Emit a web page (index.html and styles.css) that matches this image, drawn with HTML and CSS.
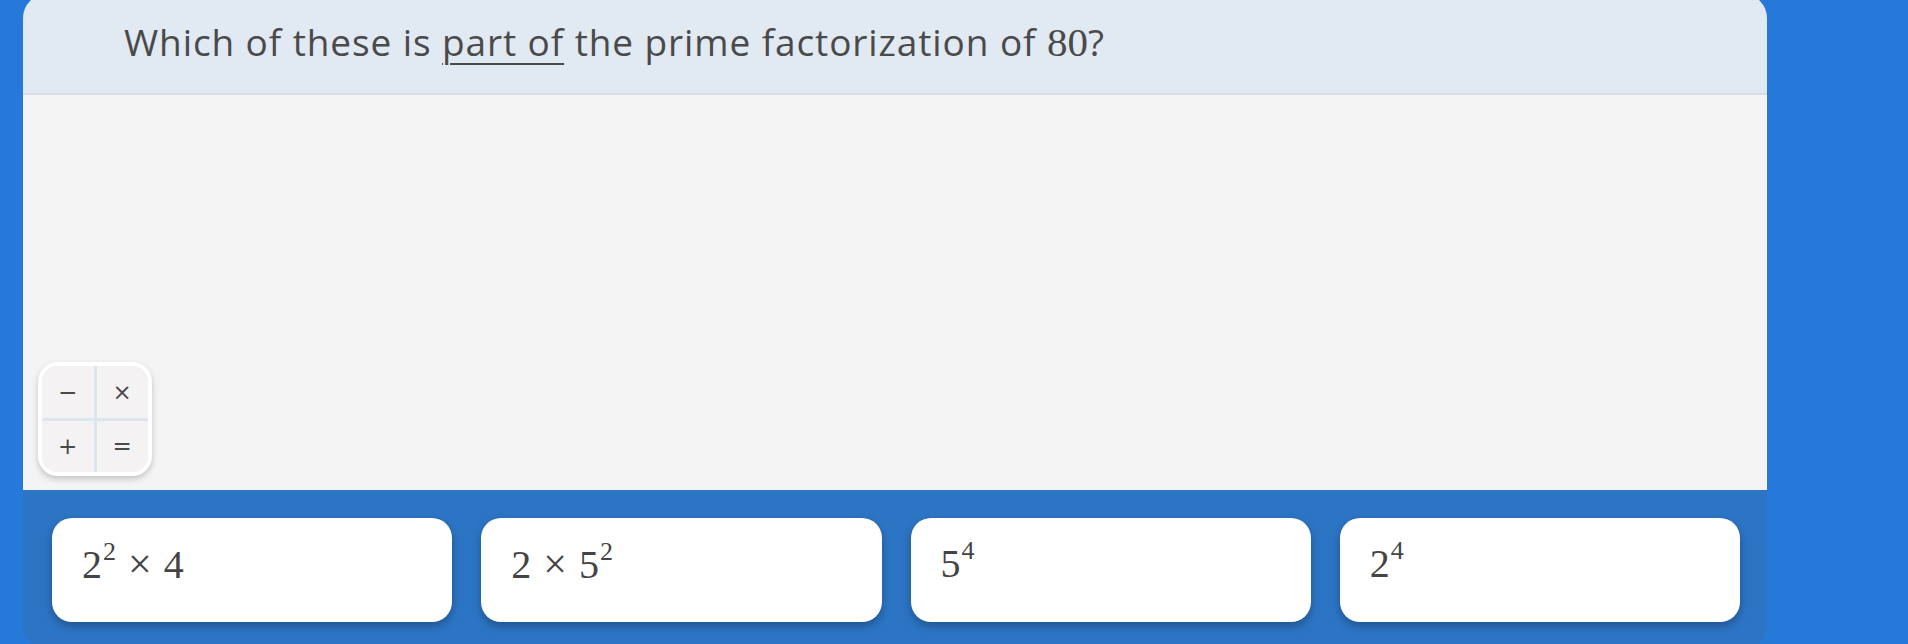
FILE: index.html
```html
<!DOCTYPE html>
<html>
<head>
<meta charset="utf-8">
<link rel="stylesheet" href="styles.css">
</head>
<body>
<div class="card">
  <div class="header">
    <p class="question">Which of these is <span class="ul">part of</span> the prime factorization of <span class="math">80</span>?</p>
  </div>
  <div class="work">
    <div class="calc">
      <div class="calc-grid">
        <span class="cell">−</span>
        <span class="cell">×</span>
        <span class="cell">+</span>
        <span class="cell">=</span>
      </div>
    </div>
  </div>
  <div class="answers">
    <div class="answer"><span class="math">2<sup>2</sup><span class="op">×</span>4</span></div>
    <div class="answer"><span class="math">2<span class="op">×</span>5<sup>2</sup></span></div>
    <div class="answer"><span class="math">5<sup>4</sup></span></div>
    <div class="answer"><span class="math">2<sup>4</sup></span></div>
  </div>
</div>
</body>
</html>
```

FILE: styles.css
```css
html, body {
  margin: 0;
  padding: 0;
}
body {
  background: #2679d9;
  width: 1908px;
  height: 644px;
  overflow: hidden;
  font-family: "Open Sans", "Noto Sans", sans-serif;
  color: #4a4a4a;
}
.card {
  margin: -6px 0 0 23px;
  width: 1744px;
  border-radius: 24px;
  overflow: hidden;
  display: flex;
  flex-direction: column;
}
.header {
  background: #e1e9f3;
  border-bottom: 2px solid #d9dde3;
  box-sizing: border-box;
  height: 101px;
  padding: 23px 0 0 101px;
}
.question {
  margin: 0;
  font-size: 37px;
  line-height: 50px;
  letter-spacing: 0.9px;
  color: #4a4a4a;
}
.ul {
  text-decoration: underline;
  text-decoration-thickness: 2px;
  text-underline-offset: 7px;
}
.math {
  font-family: "Liberation Serif", "DejaVu Serif", serif;
}
.question .math {
  font-size: 41px;
  letter-spacing: 0;
}
.work {
  background: #f4f4f4;
  height: 395px;
  display: flex;
  flex-direction: column;
  justify-content: flex-end;
  padding: 0 0 14px 15px;
  box-sizing: border-box;
}
.calc {
  width: 114px;
  height: 114px;
  box-sizing: border-box;
  border: 4px solid #ffffff;
  border-radius: 20px;
  background: #f4f2f3;
  box-shadow: 0 3px 6px rgba(0, 0, 0, 0.2);
  overflow: hidden;
}
.calc-grid {
  width: 100%;
  height: 100%;
  display: grid;
  grid-template-columns: 1fr 1fr;
  grid-template-rows: 1fr 1fr;
  gap: 3px;
  background: #dce6f1;
}
.cell {
  background: #f4f2f3;
  display: flex;
  align-items: center;
  justify-content: center;
  font-family: "DejaVu Sans", sans-serif;
  font-size: 23px;
  color: #4a4a4a;
}
.answers {
  background: #2c74c4;
  display: flex;
  gap: 29px;
  padding: 28px 27px 28px 29px;
  height: 160px;
  box-sizing: border-box;
}
.answer {
  flex: 1;
  height: 104px;
  background: #ffffff;
  border-radius: 20px;
  box-shadow: 0 4px 8px rgba(0, 0, 0, 0.28);
  padding: 22px 0 0 30px;
  box-sizing: border-box;
}
.answer .math {
  font-size: 40px;
  color: #444444;
  line-height: 48px;
}
.answer sup {
  font-size: 26px;
  vertical-align: 0;
  position: relative;
  top: -18px;
  margin-left: 1px;
}
.op {
  font-size: 42px;
  margin: 0 12px;
}
```
